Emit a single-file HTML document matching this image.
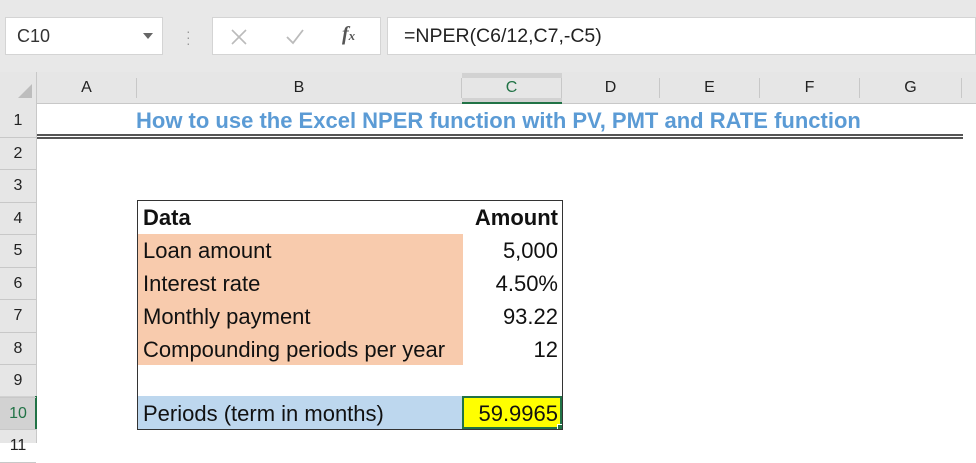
<!DOCTYPE html>
<html><head><meta charset="utf-8"><style>
*{margin:0;padding:0;box-sizing:border-box}
body{width:976px;height:443px;overflow:hidden;background:#fff;font-family:"Liberation Sans",Calibri,sans-serif;position:relative}
.a{position:absolute}
.hdr{background:#e6e6e6;color:#222;font-size:16px;text-align:center}
.t{font-size:22px;color:#111;white-space:nowrap;line-height:24px}
</style></head><body>
<div class="a" style="left:0;top:0;width:976px;height:72px;background:#e8e8e8"></div>
<div class="a" style="left:5px;top:17px;width:158px;height:38px;background:#fff;border:1px solid #d4d4d4"></div>
<div class="a" style="left:17px;top:26px;font-size:18px;color:#333">C10</div>
<div class="a" style="left:143px;top:33px;width:0;height:0;border-left:5px solid transparent;border-right:5px solid transparent;border-top:6px solid #666"></div>
<div class="a" style="left:186px;top:28px;color:#999;font-size:14px;line-height:6px">·<br>·<br>·</div>
<div class="a" style="left:212px;top:17px;width:169px;height:38px;background:#fff;border:1px solid #d4d4d4"></div>
<svg class="a" style="left:230px;top:28px" width="18" height="18"><path d="M2 2L16 16M16 2L2 16" stroke="#bbb" stroke-width="1.6"/></svg>
<svg class="a" style="left:285px;top:28px" width="20" height="18"><path d="M2 9L8 15L18 2" stroke="#bbb" stroke-width="1.8" fill="none"/></svg>
<div class="a" style="left:342px;top:23px;font-family:'Liberation Serif',serif;font-style:italic;font-weight:bold;font-size:20px;color:#555">f<span style="font-size:13px">x</span></div>
<div class="a" style="left:387px;top:17px;width:589px;height:38px;background:#fff;border:1px solid #d4d4d4"></div>
<div class="a" style="left:404px;top:25px;font-size:19.5px;color:#222">=NPER(C6/12,C7,-C5)</div>

<div class="a" style="left:0;top:72px;width:976px;height:32px;background:#e6e6e6;border-bottom:1px solid #c8c8c8"></div>
<div class="a" style="left:0;top:72px;width:37px;height:371px;background:#e6e6e6;border-right:1px solid #c8c8c8"></div>
<svg class="a" style="left:16px;top:82px" width="18" height="18"><path d="M16 2L16 16L2 16Z" fill="#bdbdbd"/></svg>
<div class="a" style="left:462px;top:73px;width:100px;height:31px;background:#d2d2d2;border-bottom:2px solid #217346"></div>
<div id="cols"></div>
<div class="a" style="left:0;top:396px;width:37px;height:33px;background:#d2d2d2;border-right:2px solid #217346"></div>
<div id="rows"></div>

<div class="a" style="left:37px;top:134px;width:926px;height:5px;border-top:2px solid #555;border-bottom:2px solid #555"></div>
<div class="a" style="left:136px;top:108px;font-size:22px;font-weight:bold;color:#5b9bd5;white-space:nowrap">How to use the Excel NPER function with PV, PMT and RATE function</div>

<div class="a" style="left:138px;top:234px;width:325px;height:131px;background:#f8cbad"></div>
<div class="a" style="left:138px;top:396px;width:325px;height:33px;background:#bdd7ee"></div>
<div class="a" style="left:462px;top:396px;width:100px;height:33px;background:#ffff00;border:2px solid #217346"></div>
<div class="a" style="left:557px;top:424px;width:7px;height:7px;background:#217346;border:1px solid #fff"></div>
<div class="a" style="left:137px;top:200px;width:426px;height:230px;border:1.5px solid #333"></div>

<div class="a t" style="left:143px;top:206px;font-weight:bold">Data</div>
<div class="a t" style="right:418px;top:206px;font-weight:bold">Amount</div>
<div class="a t" style="left:143px;top:239px">Loan amount</div>
<div class="a t" style="right:418px;top:239px">5,000</div>
<div class="a t" style="left:143px;top:272px">Interest rate</div>
<div class="a t" style="right:418px;top:272px">4.50%</div>
<div class="a t" style="left:143px;top:305px">Monthly payment</div>
<div class="a t" style="right:418px;top:305px">93.22</div>
<div class="a t" style="left:143px;top:338px">Compounding periods per year</div>
<div class="a t" style="right:418px;top:338px">12</div>
<div class="a t" style="left:143px;top:402px">Periods (term in months)</div>
<div class="a t" style="right:418px;top:402px">59.9965</div>
<script>
var c=[["A",37,137],["B",137,462],["C",462,562],["D",562,660],["E",660,760],["F",760,860],["G",860,962],["",962,1076]],h="";
c.forEach(function(x){h+='<div class="a hdr" style="left:'+x[1]+'px;top:78px;width:'+(x[2]-x[1])+'px;height:20px;line-height:20px;border-right:1px solid #c8c8c8;'+(x[0]=="C"?'color:#217346':'')+'">'+x[0]+'</div>'});
document.getElementById("cols").innerHTML=h;h="";
for(var i=1;i<=11;i++){var t=105+(i-1)*32.5;h+='<div class="a hdr" style="left:0;top:'+t+'px;width:36px;height:32.5px;line-height:32px;border-bottom:1px solid #c8c8c8;background:transparent;'+(i==10?'color:#217346':'')+'">'+i+'</div>'}
document.getElementById("rows").innerHTML=h;
</script>
</body></html>
